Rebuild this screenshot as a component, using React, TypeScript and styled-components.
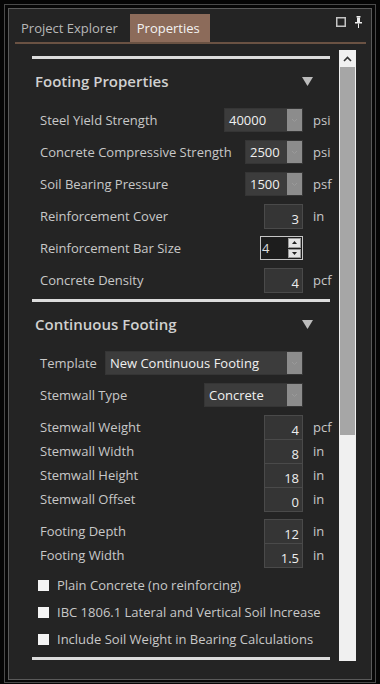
import React from 'react';
import styled, { createGlobalStyle } from 'styled-components';

const Global = createGlobalStyle`
  html, body { margin: 0; padding: 0; background: #000; }
  body { font-family: "Open Sans", "Noto Sans", sans-serif; }
  * { box-sizing: border-box; }
`;

const Frame = styled.div`
  width: 380px;
  height: 684px;
  padding: 4px 4px 1px 4px;
  background: #050505;
`;

const OuterRing = styled.div`
  height: 100%;
  border: 1px solid #4a4a4a;
  padding: 3px 3px 2px 3px;
  background: #070707;
`;

const Panel = styled.div`
  height: 100%;
  border: 1px solid #5a5a5a;
  background: #242424;
  display: flex;
  flex-direction: column;
`;

const TabBar = styled.div`
  display: flex;
  align-items: flex-end;
  height: 35px;
  margin: 0 5px 0 6px;
  border-bottom: 2px solid #6a5243;
`;

const Tab = styled.div<{ $active?: boolean; $pl: number; $pr: number }>`
  height: 28px;
  display: flex;
  align-items: center;
  padding: 0 ${(p) => p.$pr}px 0 ${(p) => p.$pl}px;
  font-size: 13px;
  color: ${(p) => (p.$active ? '#f3f3f3' : '#b8b8b8')};
  background: ${(p) => (p.$active ? '#8c6b5a' : 'transparent')};
`;

const TabTools = styled.div`
  margin-left: auto;
  align-self: flex-start;
  margin-top: 7px;
  display: flex;
  align-items: center;
  gap: 9px;
  padding-right: 4px;
`;

const Body = styled.div`
  flex: 1;
  min-height: 0;
  display: flex;
  padding: 6px 15px 18px 0;
`;

const Scroller = styled.div`
  flex: 1;
  overflow: hidden;
  padding: 6px 9px 0 23px;
`;

const ScrollBar = styled.div`
  width: 17px;
  background: #f0f0f0;
  display: flex;
  flex-direction: column;
`;

const ScrollUp = styled.div`
  height: 17px;
  display: flex;
  align-items: center;
  justify-content: center;
`;

const Thumb = styled.div`
  height: 368px;
  margin: 0 1px;
  background: #a6a6a6;
`;

const Divider = styled.div`
  height: 3px;
  background: #dcdcdc;
`;

const SectionHeader = styled.div`
  height: 44px;
  display: flex;
  align-items: center;
  justify-content: space-between;
  padding: 0 17px 0 3px;
  font-size: 15px;
  font-weight: 600;
  color: #d0d0d0;
`;

const Fields = styled.div<{ $pb: number }>`
  display: flex;
  flex-direction: column;
  gap: 8px;
  padding: 5px 0 ${(p) => p.$pb}px 8px;
`;

const Row = styled.div`
  display: flex;
  align-items: center;
  height: 24px;
`;

const Stack = styled.div`
  display: flex;
  flex-direction: column;
`;

const StackRow = styled.div`
  display: flex;
  align-items: center;
  height: 24px;
`;

const Label = styled.div<{ $fixed?: boolean }>`
  flex: ${(p) => (p.$fixed ? 'none' : '1')};
  font-size: 13px;
  color: #c8c8c8;
  white-space: nowrap;
`;

const Unit = styled.div`
  width: 27px;
  padding-left: 10px;
  font-size: 13px;
  color: #c8c8c8;
  white-space: nowrap;
`;

const Combo = styled.div<{ $w?: number }>`
  display: flex;
  height: 24px;
  ${(p) => (p.$w ? `width: ${p.$w}px;` : 'flex: 1; margin-left: 8px;')}
  background: #3c3c3c;
  box-shadow: inset 0 0 0 1px #353535;
`;

const ComboText = styled.div`
  flex: 1;
  display: flex;
  align-items: center;
  padding-left: 5px;
  font-size: 13px;
  color: #f0f0f0;
  white-space: nowrap;
`;

const ComboButton = styled.div`
  width: 15px;
  margin: 1px 1px 1px 0;
  background: #8c8c8c;
  display: flex;
  align-items: center;
  justify-content: center;
`;

const NumBox = styled.div`
  width: 39px;
  height: 25px;
  background: #353535;
  border: 1px solid #4a4a4a;
  display: flex;
  align-items: flex-end;
  justify-content: flex-end;
  padding: 0 3px 0 0;
  font-size: 13px;
  line-height: 18px;
  color: #eeeeee;
`;

const StackBox = styled(NumBox)`
  align-self: flex-start;
`;

const Spinner = styled.div`
  width: 43px;
  height: 24px;
  border: 1px solid #c6c6c6;
  background: #1d1d1d;
  display: flex;
  align-items: center;
`;

const SpinValue = styled.div`
  flex: 1;
  padding-left: 1px;
  font-size: 13px;
  color: #dcdcdc;
`;

const SpinButtons = styled.div`
  width: 14px;
  height: 100%;
  display: flex;
  flex-direction: column;
  gap: 1px;
  padding: 1px 1px 1px 0;
`;

const SpinButton = styled.div`
  flex: 1;
  background: #e4e4e4;
  border: 1px solid #9a9a9a;
  display: flex;
  align-items: center;
  justify-content: center;
`;

const CheckList = styled.div`
  display: flex;
  flex-direction: column;
  gap: 7px;
  padding: 8px 0 8px 6px;
`;

const CheckRow = styled.div`
  display: flex;
  align-items: center;
  gap: 8px;
  height: 20px;
  font-size: 13px;
  color: #c8c8c8;
  white-space: nowrap;
`;

const CheckBox = styled.div`
  width: 11px;
  height: 11px;
  background: #f4f4f4;
`;

const Chevron = () => (
  <svg width="7" height="5" viewBox="0 0 7 5">
    <path d="M1 1 L3.5 3.5 L6 1" stroke="#9a9a9a" strokeWidth="1" fill="none" />
  </svg>
);

const Collapse = () => (
  <svg width="11" height="9" viewBox="0 0 11 9">
    <polygon points="0,0 11,0 5.5,9" fill="#bcbcbc" />
  </svg>
);

const DropCombo: React.FC<{ value: string; w?: number }> = ({ value, w }) => (
  <Combo $w={w}>
    <ComboText>{value}</ComboText>
    <ComboButton>
      <Chevron />
    </ComboButton>
  </Combo>
);

const SelectRow: React.FC<{ label: string; value: string; w: number; unit?: string }> = ({ label, value, w, unit }) => (
  <Row>
    <Label>{label}</Label>
    <DropCombo value={value} w={w} />
    <Unit>{unit}</Unit>
  </Row>
);

const NumRow: React.FC<{ label: string; value: string; unit: string }> = ({ label, value, unit }) => (
  <Row>
    <Label>{label}</Label>
    <NumBox>{value}</NumBox>
    <Unit>{unit}</Unit>
  </Row>
);

const StackField: React.FC<{ label: string; value: string; unit: string }> = ({ label, value, unit }) => (
  <StackRow>
    <Label>{label}</Label>
    <StackBox>{value}</StackBox>
    <Unit>{unit}</Unit>
  </StackRow>
);

export default function App() {
  return (
    <>
      <Global />
      <Frame>
        <OuterRing>
          <Panel>
            <TabBar>
              <Tab $pl={6} $pr={12}>Project Explorer</Tab>
              <Tab $active $pl={7} $pr={10}>Properties</Tab>
              <TabTools>
                <svg width="10" height="10" viewBox="0 0 10 10">
                  <rect x="0.75" y="0.75" width="8.5" height="8.5" fill="none" stroke="#c4c4c4" strokeWidth="1.5" />
                </svg>
                <svg width="7" height="12" viewBox="0 0 7 12">
                  <rect x="1.5" y="0" width="4" height="1.5" fill="#ececec" />
                  <rect x="2" y="1.5" width="3" height="4.5" fill="#ececec" />
                  <rect x="0" y="6" width="7" height="1.5" fill="#ececec" />
                  <rect x="3" y="7.5" width="1" height="4.5" fill="#ececec" />
                </svg>
              </TabTools>
            </TabBar>
            <Body>
              <Scroller>
                <Divider />
                <SectionHeader>
                  <span>Footing Properties</span>
                  <Collapse />
                </SectionHeader>
                <Fields $pb={7}>
                  <SelectRow label="Steel Yield Strength" value="40000" w={79} unit="psi" />
                  <SelectRow label="Concrete Compressive Strength" value="2500" w={58} unit="psi" />
                  <SelectRow label="Soil Bearing Pressure" value="1500" w={58} unit="psf" />
                  <NumRow label="Reinforcement Cover" value="3" unit="in" />
                  <Row>
                    <Label>Reinforcement Bar Size</Label>
                    <Spinner>
                      <SpinValue>4</SpinValue>
                      <SpinButtons>
                        <SpinButton>
                          <svg width="5" height="3" viewBox="0 0 5 3">
                            <polygon points="0,3 5,3 2.5,0" fill="#222" />
                          </svg>
                        </SpinButton>
                        <SpinButton>
                          <svg width="5" height="3" viewBox="0 0 5 3">
                            <polygon points="0,0 5,0 2.5,3" fill="#222" />
                          </svg>
                        </SpinButton>
                      </SpinButtons>
                    </Spinner>
                    <Unit />
                  </Row>
                  <NumRow label="Concrete Density" value="4" unit="pcf" />
                </Fields>
                <Divider />
                <SectionHeader>
                  <span>Continuous Footing</span>
                  <Collapse />
                </SectionHeader>
                <Fields $pb={0}>
                  <Row>
                    <Label $fixed>Template</Label>
                    <DropCombo value="New Continuous Footing" />
                    <Unit />
                  </Row>
                  <SelectRow label="Stemwall Type" value="Concrete" w={99} />
                  <Stack>
                    <StackField label="Stemwall Weight" value="4" unit="pcf" />
                    <StackField label="Stemwall Width" value="8" unit="in" />
                    <StackField label="Stemwall Height" value="18" unit="in" />
                    <StackField label="Stemwall Offset" value="0" unit="in" />
                  </Stack>
                  <Stack>
                    <StackField label="Footing Depth" value="12" unit="in" />
                    <StackField label="Footing Width" value="1.5" unit="in" />
                  </Stack>
                </Fields>
                <CheckList>
                  <CheckRow>
                    <CheckBox />
                    Plain Concrete (no reinforcing)
                  </CheckRow>
                  <CheckRow>
                    <CheckBox />
                    IBC 1806.1 Lateral and Vertical Soil Increase
                  </CheckRow>
                  <CheckRow>
                    <CheckBox />
                    Include Soil Weight in Bearing Calculations
                  </CheckRow>
                </CheckList>
                <Divider />
              </Scroller>
              <ScrollBar>
                <ScrollUp>
                  <svg width="9" height="6" viewBox="0 0 9 6">
                    <path d="M1 5 L4.5 1.5 L8 5" stroke="#333" strokeWidth="1.6" fill="none" />
                  </svg>
                </ScrollUp>
                <Thumb />
              </ScrollBar>
            </Body>
          </Panel>
        </OuterRing>
      </Frame>
    </>
  );
}
